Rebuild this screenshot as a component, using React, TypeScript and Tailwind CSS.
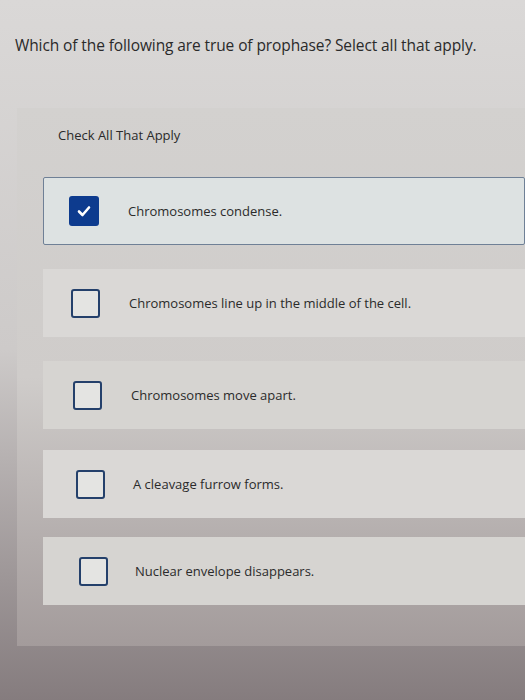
import React from 'react';

const options = [
  { text: 'Chromosomes condense.', checked: true, pl: 'pl-[25px]', gap: 'gap-[29px]', mt: '' },
  { text: 'Chromosomes line up in the middle of the cell.', checked: false, pl: 'pl-[28px]', gap: 'gap-[29px]', mt: 'mt-[24px]' },
  { text: 'Chromosomes move apart.', checked: false, pl: 'pl-[30px]', gap: 'gap-[29px]', mt: 'mt-[24px]' },
  { text: 'A cleavage furrow forms.', checked: false, pl: 'pl-[33px]', gap: 'gap-[28px]', mt: 'mt-[21px]' },
  { text: 'Nuclear envelope disappears.', checked: false, pl: 'pl-[36px]', gap: 'gap-[27px]', mt: 'mt-[19px]' },
];

function CheckBox({ checked }: { checked: boolean }) {
  if (checked) {
    return (
      <span className="flex h-[30px] w-[30px] shrink-0 items-center justify-center rounded-[3px] bg-[#0d3b8e]">
        <svg width="14" height="12" viewBox="0 0 14 12" fill="none">
          <path d="M2 6.5 5.5 10 12 2.5" stroke="white" strokeWidth="2.6" strokeLinecap="round" strokeLinejoin="round" />
        </svg>
      </span>
    );
  }
  return <span className="h-[29px] w-[29px] shrink-0 rounded-[3px] border-2 border-[#24406b] bg-[#e4e4e2]" />;
}

export default function App() {
  return (
    <div
      className="h-[700px] w-[525px] overflow-hidden bg-gradient-to-b from-[#dad8d7] via-[#cdcac9] to-[#857c7e] pt-[34px]"
      style={{ fontFamily: '"Open Sans", Lato, sans-serif' }}
    >
      <h1 className="pl-[15px] text-[15.5px] leading-[22px] tracking-[-0.1px] text-[#2a2a2a]">
        Which of the following are true of prophase? Select all that apply.
      </h1>

      <div className="ml-[17px] mt-[52px] h-[538px] bg-gradient-to-b from-[#d3d1cf] via-[#cfccca] to-[#a39b9b] pb-4">
        <div className="pl-[41px] pt-[18px] text-[13px] leading-[18px] text-[#2a2a2a]">Check All That Apply</div>

        <div className="mt-[33px] flex flex-col">
          {options.map((o, i) => (
            <div
              key={o.text}
              className={
                o.checked
                  ? `ml-[26px] flex h-[68px] items-center ${o.gap} rounded-[2px] border border-[#6f8096] bg-[#dde2e2] ${o.pl}`
                  : `ml-[26px] ${o.mt} flex h-[68px] items-center ${o.gap} ${i % 2 === 0 ? 'bg-[#d6d4d1]' : 'bg-[#dad8d6]'} ${o.pl}`
              }
            >
              <CheckBox checked={o.checked} />
              <span className="text-[13px] leading-[18px] text-[#2b2b2b]">{o.text}</span>
            </div>
          ))}
        </div>
      </div>
    </div>
  );
}
